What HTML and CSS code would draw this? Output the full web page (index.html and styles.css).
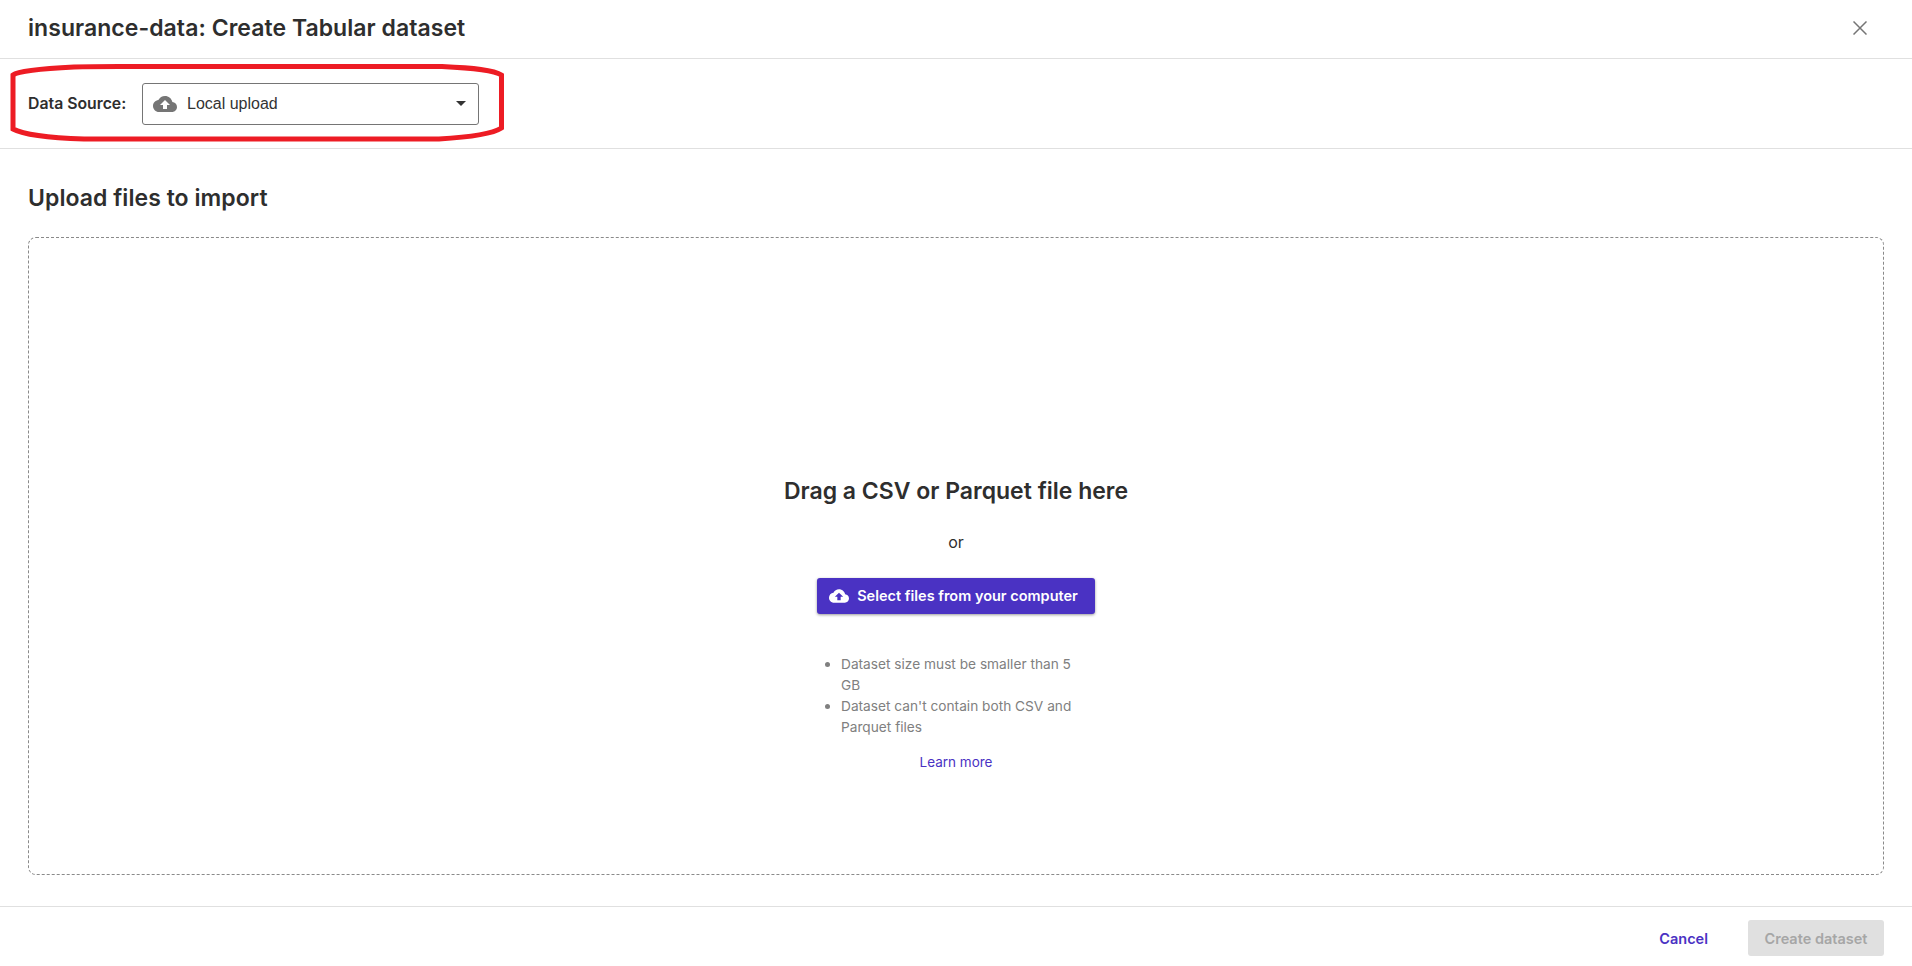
FILE: index.html
```html
<!DOCTYPE html>
<html lang="en">
<head>
    <meta charset="UTF-8">
    <title>insurance-data: Create Tabular dataset</title>
    <link rel="stylesheet" href="styles.css">
</head>
<body>
    <header class="dialog-header">
        <h1 class="dialog-title">insurance-data: Create Tabular dataset</h1>
        <button class="close-button" aria-label="Close">
            <svg viewBox="0 0 14 14" width="14" height="14" fill="none" stroke="currentColor" stroke-width="1.5">
                <path d="M0.5 0.5L13.5 13.5M13.5 0.5L0.5 13.5"/>
            </svg>
        </button>
    </header>

    <div class="source-bar">
        <label class="source-label">Data Source:</label>
        <div class="source-select">
            <svg class="cloud-icon" viewBox="0 0 24 24" width="24" height="24">
                <path fill="currentColor" d="M19.35 10.04C18.67 6.59 15.64 4 12 4 9.11 4 6.6 5.64 5.35 8.04 2.34 8.36 0 10.91 0 14c0 3.31 2.69 6 6 6h13c2.76 0 5-2.24 5-5 0-2.64-2.05-4.78-4.65-4.96zM14 13v4h-4v-4H7l5-5 5 5h-3z"/>
            </svg>
            <span class="source-value">Local upload</span>
            <span class="caret"></span>
        </div>
    </div>

    <main class="upload">
        <h2 class="upload-title">Upload files to import</h2>
        <div class="dropzone">
            <h3 class="drop-title">Drag a CSV or Parquet file here</h3>
            <p class="drop-or">or</p>
            <button class="select-button">
                <svg viewBox="0 0 24 24" width="20" height="20">
                    <path fill="currentColor" d="M19.35 10.04C18.67 6.59 15.64 4 12 4 9.11 4 6.6 5.64 5.35 8.04 2.34 8.36 0 10.91 0 14c0 3.31 2.69 6 6 6h13c2.76 0 5-2.24 5-5 0-2.64-2.05-4.78-4.65-4.96zM14 13v4h-4v-4H7l5-5 5 5h-3z"/>
                </svg>
                Select files from your computer
            </button>
            <ul class="drop-rules">
                <li>Dataset size must be smaller than 5 GB</li>
                <li>Dataset can't contain both CSV and Parquet files</li>
            </ul>
            <a class="learn-more" href="#">Learn more</a>
        </div>
    </main>

    <footer class="dialog-footer">
        <button class="cancel-button">Cancel</button>
        <button class="create-button" disabled>Create dataset</button>
    </footer>

    <!-- red marker drawn over the screenshot -->
    <svg class="marker" viewBox="0 0 500 84" width="500" height="84" fill="none">
        <path d="M4 15C8 12 25 9 65 7C80 6.500 90 6.500 110 6.500H433C465 8 485 10 492.500 15V68C485 73 465 77 430 79H75C45 78 15 75 4 69Z" stroke="#ed1c24" stroke-width="5"/>
    </svg>
</body>
</html>
```

FILE: styles.css
```css
* {
    box-sizing: border-box;
}

body {
    margin: 0;
    height: 100vh;
    display: flex;
    flex-direction: column;
    background: #fff;
    color: #2e2e2e;
    font-family: "Inter", "Liberation Sans", sans-serif;
    overflow: hidden;
}

button {
    font-family: inherit;
    border: none;
    cursor: pointer;
}

.dialog-header {
    height: 59px;
    flex-shrink: 0;
    display: flex;
    align-items: center;
    justify-content: space-between;
    padding: 0 28px;
    border-bottom: 1px solid #e0e0e0;
}

.dialog-title {
    margin: 0 0 2px;
    font-size: 23px;
    font-weight: 600;
    line-height: 56px;
    letter-spacing: 0.05px;
}

.close-button {
    display: flex;
    padding: 0;
    margin: 0 17px 2px 0;
    background: none;
    color: #757575;
}

.source-bar {
    height: 90px;
    flex-shrink: 0;
    display: flex;
    align-items: center;
    padding: 0 28px;
    border-bottom: 1px solid #e0e0e0;
}

.source-label {
    width: 114px;
    font-size: 15.800px;
    font-weight: 600;
}

.source-select {
    width: 337px;
    height: 42px;
    display: flex;
    align-items: center;
    padding: 0 12px 0 10px;
    border: 1px solid #757575;
    border-radius: 3px;
}

.cloud-icon {
    color: #757575;
    flex-shrink: 0;
}

.source-value {
    flex: 1;
    margin-left: 10px;
    color: #333;
    font-family: "Liberation Sans", sans-serif;
    font-size: 16px;
}

.caret {
    border-left: 5px solid transparent;
    border-right: 5px solid transparent;
    border-top: 5px solid #333;
}

.upload {
    flex: 1;
    display: flex;
    flex-direction: column;
    padding: 0 28px 31px;
    border-bottom: 1px solid #e0e0e0;
}

.upload-title {
    margin: 0;
    padding-top: 10px;
    font-size: 23px;
    font-weight: 600;
    line-height: 78px;
    letter-spacing: 0.05px;
}

.dropzone {
    flex: 1;
    display: flex;
    flex-direction: column;
    align-items: center;
    padding-top: 238px;
    border: 1px dashed #8a8a8a;
    border-radius: 8px;
}

.drop-title {
    margin: 0;
    font-size: 23px;
    font-weight: 600;
    line-height: 30px;
}

.drop-or {
    margin: 25px 0 0;
    font-size: 16px;
    line-height: 22px;
}

.select-button {
    display: flex;
    align-items: center;
    gap: 8px;
    height: 36px;
    margin-top: 25px;
    padding: 0 17px 1px 12px;
    background: #4a32c3;
    color: #fff;
    font-size: 14.500px;
    font-weight: 600;
    border-radius: 3px;
    box-shadow: 0 1px 3px rgba(0,0,0,0.4);
}

.drop-rules {
    width: 280px;
    margin: 40px 0 0;
    padding: 0 15px 0 25px;
    color: #808080;
    font-size: 13.700px;
    line-height: 21px;
    list-style: none;
}

.drop-rules li {
    position: relative;
}

.drop-rules li::before {
    content: "";
    position: absolute;
    top: 8px;
    left: -16px;
    width: 5px;
    height: 5px;
    border-radius: 50%;
    background: #808080;
}

.learn-more {
    margin-top: 14px;
    color: #4a32c3;
    font-size: 13.500px;
    line-height: 21px;
    text-decoration: none;
}

.dialog-footer {
    height: 59px;
    flex-shrink: 0;
    display: flex;
    align-items: center;
    justify-content: flex-end;
    gap: 40px;
    padding: 3px 28px 0;
}

.cancel-button {
    padding: 0;
    background: none;
    color: #4a32c3;
    font-size: 14.500px;
    font-weight: 600;
}

.create-button {
    width: 136px;
    height: 36px;
    background: #e0e0e0;
    color: #a6a6a6;
    font-size: 14.500px;
    font-weight: 600;
    border-radius: 3px;
    cursor: default;
}

.marker {
    position: absolute;
    top: 60px;
    left: 9px;
}
```
